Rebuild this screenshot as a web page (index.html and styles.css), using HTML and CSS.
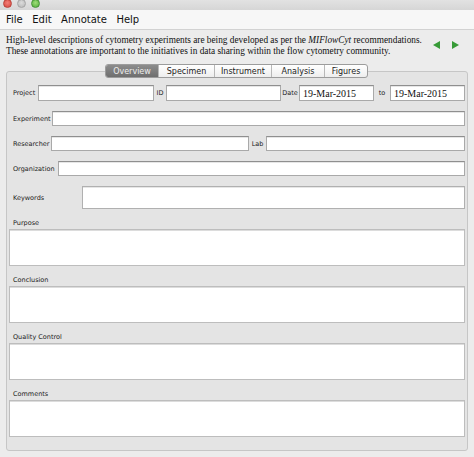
FILE: index.html
```html
<!DOCTYPE html>
<html>
<head>
<meta charset="utf-8">
<link rel="stylesheet" href="styles.css">
</head>
<body>
<div class="window">
  <div class="titlebar">
    <span class="light red"></span>
    <span class="light gray"></span>
    <span class="light green"></span>
  </div>
  <div class="menubar">
    <span>File</span><span>Edit</span><span>Annotate</span><span>Help</span>
  </div>
  <div class="intro">
    <p>High-level descriptions of cytometry experiments are being developed as per the <i>MIFlowCyt</i> recommendations.<br>These annotations are important to the initiatives in data sharing within the flow cytometry community.</p>
    <div class="nav">
      <svg width="7" height="8" viewBox="0 0 7 8"><polygon points="7,0 7,8 0,4" fill="#379b37"/></svg>
      <svg width="7" height="8" viewBox="0 0 7 8"><polygon points="0,0 7,4 0,8" fill="#379b37"/></svg>
    </div>
  </div>
  <div class="tabs">
    <span class="tab active w1">Overview</span><span class="tab w2">Specimen</span><span class="tab w3">Instrument</span><span class="tab w4">Analysis</span><span class="tab w5">Figures</span>
  </div>
  <div class="panel">
    <div class="row r1">
      <label>Project</label><div class="field"></div>
      <label class="c">ID</label><div class="field"></div>
      <label class="c">Date</label><div class="field date">19-Mar-2015</div>
      <label class="c">to</label><div class="field date">19-Mar-2015</div>
    </div>
    <div class="row r2">
      <label>Experiment</label><div class="field"></div>
    </div>
    <div class="row r3">
      <label>Researcher</label><div class="field"></div>
      <label class="c">Lab</label><div class="field"></div>
    </div>
    <div class="row r4">
      <label>Organization</label><div class="field"></div>
    </div>
    <div class="row r5">
      <label>Keywords</label><div class="field tall"></div>
    </div>
    <div class="section"><label>Purpose</label><div class="area"></div></div>
    <div class="section"><label>Conclusion</label><div class="area"></div></div>
    <div class="section"><label>Quality Control</label><div class="area"></div></div>
    <div class="section"><label>Comments</label><div class="area"></div></div>
  </div>
</div>
</body>
</html>
```
FILE: styles.css
```css
html, body {
  margin: 0;
  padding: 0;
  background: #ececec;
}
.window {
  width: 474px;
  height: 457px;
  overflow: hidden;
  background: #ececec;
}
.titlebar {
  height: 10px;
  display: flex;
  align-items: flex-start;
  gap: 5px;
  padding-left: 3px;
  background: linear-gradient(#e2e2e2, #d6d6d6);
}
.light {
  width: 9px;
  height: 9px;
  border-radius: 50%;
  margin-top: -1px;
  box-sizing: border-box;
}
.light.red { background: radial-gradient(circle at 50% 40%, #f27f78, #d6443c); border: 1px solid #b9443c; }
.light.gray { background: radial-gradient(circle at 50% 40%, #dcdcdc, #b6b6b6); border: 1px solid #a5a5a5; }
.light.green { background: radial-gradient(circle at 50% 40%, #9fdc7a, #4fae35); border: 1px solid #47923a; }
.menubar {
  height: 19px;
  display: flex;
  align-items: center;
  gap: 9.5px;
  padding-left: 6px;
  background: #f7f7f7;
  border-bottom: 1px solid #d2d2d2;
  font-family: "DejaVu Sans", sans-serif;
  font-size: 10px;
  color: #111;
}
.intro {
  display: flex;
  align-items: center;
  padding: 5px 0 0 6px;
}
.intro p {
  margin: 0;
  font-family: "Liberation Serif", serif;
  font-size: 9.3px;
  line-height: 11px;
  color: #111;
  white-space: nowrap;
  flex: none;
}
.nav {
  display: flex;
  gap: 12px;
  margin-left: auto;
  padding-right: 15px;
  margin-top: -2px;
}
.nav svg { display: block; }
.tabs {
  position: relative;
  z-index: 1;
  display: flex;
  margin: 7px 0 0 105px;
  width: max-content;
  height: 14px;
  box-sizing: border-box;
  border: 1px solid #9c9c9c;
  border-radius: 3px;
  overflow: hidden;
  background: linear-gradient(#ffffff, #eeeeee);
  font-family: "DejaVu Sans", sans-serif;
  font-size: 8px;
  color: #222;
}
.tab {
  display: flex;
  align-items: center;
  justify-content: center;
  height: 12px;
  border-left: 1px solid #b8b8b8;
  box-sizing: border-box;
}
.tab:first-child { border-left: none; }
.tab.active {
  background: linear-gradient(#8c8c8c, #6e6e6e);
  color: #ececec;
}
.w1 { width: 52px; }
.w2 { width: 56px; }
.w3 { width: 57px; }
.w4 { width: 53px; }
.w5 { width: 43px; }
.panel {
  margin: -7px 6px 0 6px;
  height: 380px;
  box-sizing: border-box;
  border: 1px solid #c6c6c6;
  border-radius: 3px;
  background: #e4e4e4;
  padding: 13px 2px 0 2px;
  font-family: "DejaVu Sans", sans-serif;
  font-size: 6.5px;
  color: #222;
}
.row {
  display: grid;
  align-items: center;
  padding-left: 4px;
  margin-bottom: 10px;
}
.row label { white-space: nowrap; }
.row label.c { text-align: center; }
.r1 { grid-template-columns: 25px 116px 12px 115px 18px 75px 16px 1fr; height: 16px; margin-bottom: 10px; }
.r2 { grid-template-columns: 39px 1fr; height: 15px; }
.r3 { grid-template-columns: 38px 198px 17px 1fr; height: 15px; }
.r4 { grid-template-columns: 45px 1fr; height: 15px; }
.r5 { grid-template-columns: 69px 1fr; height: 23px; margin-bottom: 0; }
.field {
  height: 100%;
  box-sizing: border-box;
  background: #ffffff;
  border: 1px solid #a9a9a9;
  border-top-color: #8f8f8f;
  box-shadow: inset 0 1px 0 #e6e6e6;
}
.field.date {
  font-family: "Liberation Serif", serif;
  font-size: 10px;
  color: #111;
  padding-left: 3px;
  display: flex;
  align-items: center;
}
.r5 .field { border-color: #b0b0b0; }
.section label {
  display: block;
  margin-top: 9px;
  height: 11px;
  line-height: 11px;
  padding-left: 4px;
}
.area {
  height: 37px;
  box-sizing: border-box;
  background: #ffffff;
  border: 1px solid #bdbdbd;
  box-shadow: inset 0 1px 0 #dcdcdc;
}
```
